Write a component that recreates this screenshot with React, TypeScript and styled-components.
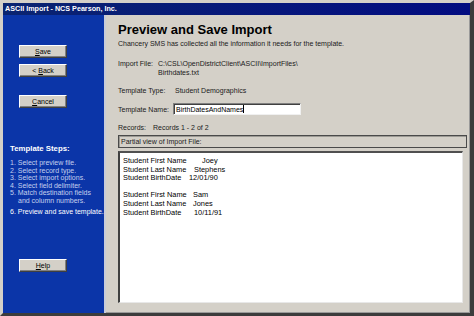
import React from 'react'
import styled, {createGlobalStyle} from "styled-components";

const GlobalStyle = createGlobalStyle`
    html, body {
        margin: 0;
        padding: 0;
        background: #d4d0c8;
    }
    body {
        font-family: "Liberation Sans", Arial, sans-serif;
    }
`

const steps = [
    {text: '1. Select preview file.'},
    {text: '2. Select record type.'},
    {text: '3. Select import options.'},
    {text: '4. Select field delimiter.'},
    {text: '5. Match destination fields'},
    {text: 'and column numbers.', indent: true},
    {text: '6. Preview and save template.', current: true},
]

const records = [
    [
        {key: 'Student First Name', value: 'Joey', at: 79},
        {key: 'Student Last Name', value: 'Stephens', at: 71},
        {key: 'Student BirthDate', value: '12/01/90', at: 66},
    ],
    [
        {key: 'Student First Name', value: 'Sam', at: 70},
        {key: 'Student Last Name', value: 'Jones', at: 70},
        {key: 'Student BirthDate', value: '10/11/91', at: 71},
    ],
]

export default function App() {
    return (
        <>
            <GlobalStyle/>
            <Window>
                <TitleBar>ASCII Import - NCS Pearson, Inc.</TitleBar>
                <Body>
                    <SidePanel>
                        <Button $top={30}><u>S</u>ave</Button>
                        <Button $top={6}>&lt; <u>B</u>ack</Button>
                        <Button $top={18}><u>C</u>ancel</Button>
                        <StepsTitle>Template Steps:</StepsTitle>
                        <StepList>
                            {steps.map(step => (
                                <Step key={step.text} $indent={step.indent} $current={step.current}>
                                    {step.text}
                                </Step>
                            ))}
                        </StepList>
                        <HelpButton><u>H</u>elp</HelpButton>
                    </SidePanel>
                    <Main>
                        <Heading>Preview and Save Import</Heading>
                        <Intro>Chancery SMS has collected all the information it needs for the template.</Intro>
                        <Row $top={11}>
                            <Label $w={40}>Import File:</Label>
                            <div>
                                <div>C:\CSL\OpenDistrictClient\ASCII\ImportFiles\</div>
                                <div>Birthdates.txt</div>
                            </div>
                        </Row>
                        <Row $top={9}>
                            <Label $w={57}>Template Type:</Label>
                            <span>Student Demographics</span>
                        </Row>
                        <NameRow>
                            <Label $w={55}>Template Name:</Label>
                            <TextBox>BirthDatesAndNames<Caret/></TextBox>
                        </NameRow>
                        <Row $top={8}>
                            <Label $w={35}>Records:</Label>
                            <span>Records 1 - 2 of 2</span>
                        </Row>
                        <PartialBar>Partial view of Import File:</PartialBar>
                        <Preview>
                            {records.map((record, i) => (
                                <Record key={i}>
                                    {record.map(line => (
                                        <Line key={line.key}>
                                            <Key $w={line.at}>{line.key}</Key>
                                            <span>{line.value}</span>
                                        </Line>
                                    ))}
                                </Record>
                            ))}
                        </Preview>
                    </Main>
                </Body>
            </Window>
        </>
    )
}

const Window = styled.div`
    width: 474px;
    height: 316px;
    box-sizing: border-box;
    display: flex;
    flex-direction: column;
    background: #d4d0c8;
    border-top: 3px solid #d4d0c8;
    border-left: 3px solid #d4d0c8;
    border-right: 4px solid #3c3c3c;
    border-bottom: 3px solid #3c3c3c;
    box-shadow: inset -1px -1px 0 #9a9a9a;
`

const TitleBar = styled.div`
    height: 12px;
    flex-shrink: 0;
    padding-left: 2px;
    background: linear-gradient(90deg, #0a2470 0%, #06167c 60%, #020c80 100%);
    color: #fff;
    font-weight: bold;
    font-size: 7.2px;
    line-height: 12px;
    white-space: nowrap;
`

const Body = styled.div`
    flex: 1;
    display: flex;
    min-height: 0;
`

const SidePanel = styled.div`
    width: 101px;
    flex-shrink: 0;
    display: flex;
    flex-direction: column;
    background: #0b35a8;
    border-right: 2px solid #c8ccd8;
`

const Button = styled.div<{ $top?: number }>`
    width: 48px;
    height: 13px;
    box-sizing: border-box;
    margin: ${p => p.$top ?? 0}px 0 0 16px;
    background: #d4d0c8;
    border-top: 1px solid #fff;
    border-left: 1px solid #fff;
    border-right: 1px solid #404040;
    border-bottom: 1px solid #404040;
    box-shadow: inset -1px -1px 0 #808080;
    color: #000;
    font-size: 7px;
    line-height: 11px;
    text-align: center;
`

const HelpButton = styled(Button)`
    margin-top: auto;
    margin-bottom: 41px;
`

const StepsTitle = styled.div`
    margin: 36px 0 0 7px;
    color: #fff;
    font-weight: bold;
    font-size: 7.8px;
    line-height: 9px;
`

const StepList = styled.div`
    margin: 6px 0 0 7px;
    display: flex;
    flex-direction: column;
`

const Step = styled.div<{ $indent?: boolean; $current?: boolean }>`
    padding-left: ${p => p.$indent ? 8 : 0}px;
    margin-top: ${p => p.$current ? 4 : 0}px;
    color: ${p => p.$current ? '#ffffff' : '#c4d0ee'};
    font-size: 7px;
    line-height: 7.5px;
    white-space: nowrap;
`

const Main = styled.div`
    flex: 1;
    display: flex;
    flex-direction: column;
    padding: 7px 3px 10px 12px;
    color: #1a1a1a;
    font-size: 7px;
    line-height: 9px;
    min-width: 0;
`

const Heading = styled.div`
    color: #000;
    font-weight: bold;
    font-size: 13px;
    line-height: 15px;
`

const Intro = styled.div`
    margin-top: 3px;
    line-height: 8px;
`

const Row = styled.div<{ $top: number }>`
    display: flex;
    margin-top: ${p => p.$top}px;
`

const Label = styled.span<{ $w: number }>`
    width: ${p => p.$w}px;
    flex-shrink: 0;
`

const NameRow = styled.div`
    display: flex;
    align-items: center;
    margin-top: 8px;
    height: 12px;
`

const TextBox = styled.div`
    width: 128px;
    height: 12px;
    box-sizing: border-box;
    display: flex;
    align-items: center;
    padding-left: 2px;
    background: #fff;
    border-top: 1px solid #808080;
    border-left: 1px solid #808080;
    border-right: 1px solid #f0f0f0;
    border-bottom: 1px solid #f0f0f0;
    box-shadow: inset 1px 1px 0 #404040;
    color: #000;
`

const Caret = styled.span`
    width: 1px;
    height: 8px;
    background: #000;
`

const PartialBar = styled.div`
    margin-top: 3px;
    height: 13px;
    box-sizing: border-box;
    padding-left: 2px;
    border: 1px solid #4a4a4a;
    box-shadow: inset 1px 1px 0 #9c9a94;
    line-height: 11px;
    color: #222;
`

const Preview = styled.div`
    flex: 1;
    margin: 3px 4px 0 0;
    padding: 4px 3px;
    background: #fff;
    border-top: 2px solid #505050;
    border-left: 2px solid #404040;
    border-right: 1px solid #e8e8e8;
    border-bottom: 1px solid #e8e8e8;
    display: flex;
    flex-direction: column;
    gap: 8.6px;
    color: #000;
    font-size: 7.4px;
    line-height: 8.6px;
`

const Record = styled.div`
    display: flex;
    flex-direction: column;
`

const Line = styled.div`
    display: flex;
    white-space: nowrap;
`

const Key = styled.span<{ $w: number }>`
    width: ${p => p.$w}px;
    flex-shrink: 0;
`
